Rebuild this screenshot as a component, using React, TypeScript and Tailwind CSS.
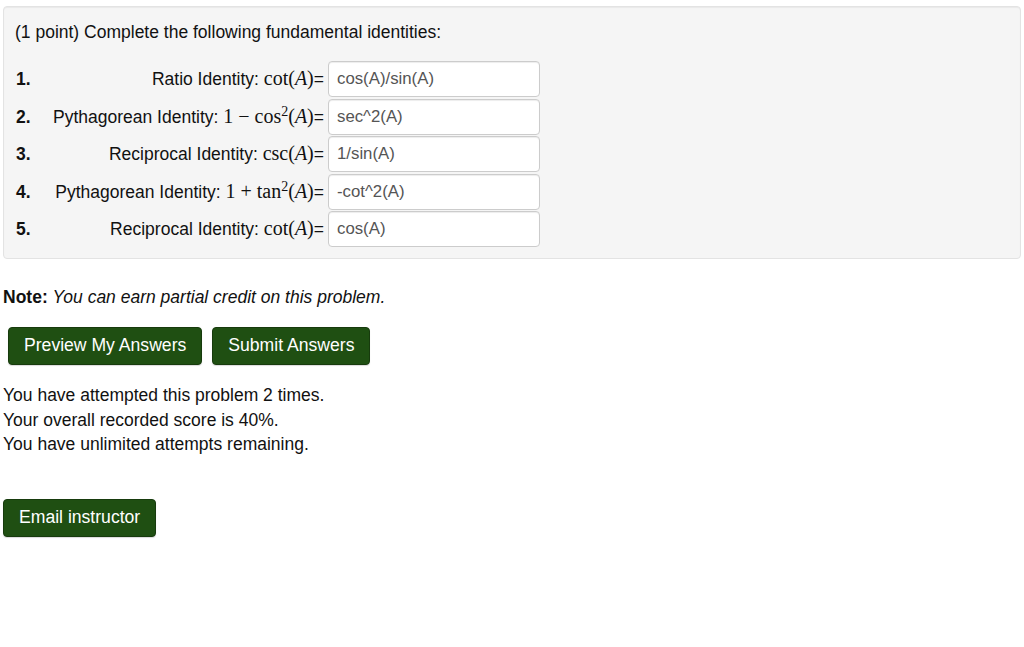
import React from "react";

const sans = { fontFamily: '"Liberation Sans", Arial, Helvetica, sans-serif' };

function M({ children }: { children: React.ReactNode }) {
  return (
    <span className="text-[20px] leading-[20px]" style={{ fontFamily: '"Liberation Serif", "Times New Roman", serif' }}>
      {children}
    </span>
  );
}
function I({ children }: { children: React.ReactNode }) {
  return <span className="italic">{children}</span>;
}

const rows: { n: string; label: string; math: React.ReactNode; value: string }[] = [
  { n: "1.", label: "Ratio Identity: ", math: <M>cot(<I>A</I>)</M>, value: "cos(A)/sin(A)" },
  {
    n: "2.",
    label: "Pythagorean Identity: ",
    math: (
      <M>
        1<span className="mx-[5px]">−</span>cos<sup className="text-[14px] leading-[0]">2</sup>(<I>A</I>)
      </M>
    ),
    value: "sec^2(A)",
  },
  { n: "3.", label: "Reciprocal Identity: ", math: <M>csc(<I>A</I>)</M>, value: "1/sin(A)" },
  {
    n: "4.",
    label: "Pythagorean Identity: ",
    math: (
      <M>
        1<span className="mx-[5px]">+</span>tan<sup className="text-[14px] leading-[0]">2</sup>(<I>A</I>)
      </M>
    ),
    value: "-cot^2(A)",
  },
  { n: "5.", label: "Reciprocal Identity: ", math: <M>cot(<I>A</I>)</M>, value: "cos(A)" },
];

function Btn({ children }: { children: React.ReactNode }) {
  return (
    <button className="h-[38px] px-[15px] rounded-[4px] bg-[#1f4f12] border border-[#173b0d] text-white text-[17.6px] leading-none shadow-[0_1px_1px_rgba(0,0,0,0.15)]">
      {children}
    </button>
  );
}

export default function App() {
  return (
    <div className="w-[1024px] h-[647px] bg-white text-[#111] text-[17.5px]" style={sans}>
      <div className="pt-[6px] px-[3px]">
        <div className="bg-[#f5f5f5] border border-[#e3e3e3] rounded-[4px] shadow-[inset_0_1px_1px_rgba(0,0,0,0.05)] pl-[11px] pt-[14px] pb-[11px] w-[1018px]">
          <div className="h-[22px] leading-[22px]">(1 point) Complete the following fundamental identities:</div>
          <div className="mt-[18px] flex flex-col gap-[1.5px]">
            {rows.map((r) => (
              <div key={r.n} className="flex items-center h-[36px]">
                <div className="flex items-baseline h-[22px] leading-[22px]">
                  <div className="w-[25px] font-bold pl-[1px]">{r.n}</div>
                  <div className="w-[288px] text-right whitespace-nowrap pr-[4px]">
                    {r.label}
                    {r.math}=
                  </div>
                </div>
                <div className="w-[212px] h-[36px] bg-white border border-[#ccc] rounded-[4px] shadow-[inset_0_1px_1px_rgba(0,0,0,0.075)] flex items-center px-[8px] text-[#555] text-[16.8px]">
                  {r.value}
                </div>
              </div>
            ))}
          </div>
        </div>
        <div className="mt-[27px] leading-[22px]">
          <span className="font-bold">Note:</span> <span className="italic">You can earn partial credit on this problem.</span>
        </div>
        <div className="mt-[19px] flex gap-[10px] pl-[5px]">
          <Btn>Preview My Answers</Btn>
          <Btn>Submit Answers</Btn>
        </div>
        <div className="mt-[18px] leading-[24.5px]">
          <div>You have attempted this problem 2 times.</div>
          <div>Your overall recorded score is 40%.</div>
          <div>You have unlimited attempts remaining.</div>
        </div>
        <div className="mt-[42px]">
          <Btn>Email instructor</Btn>
        </div>
      </div>
    </div>
  );
}
